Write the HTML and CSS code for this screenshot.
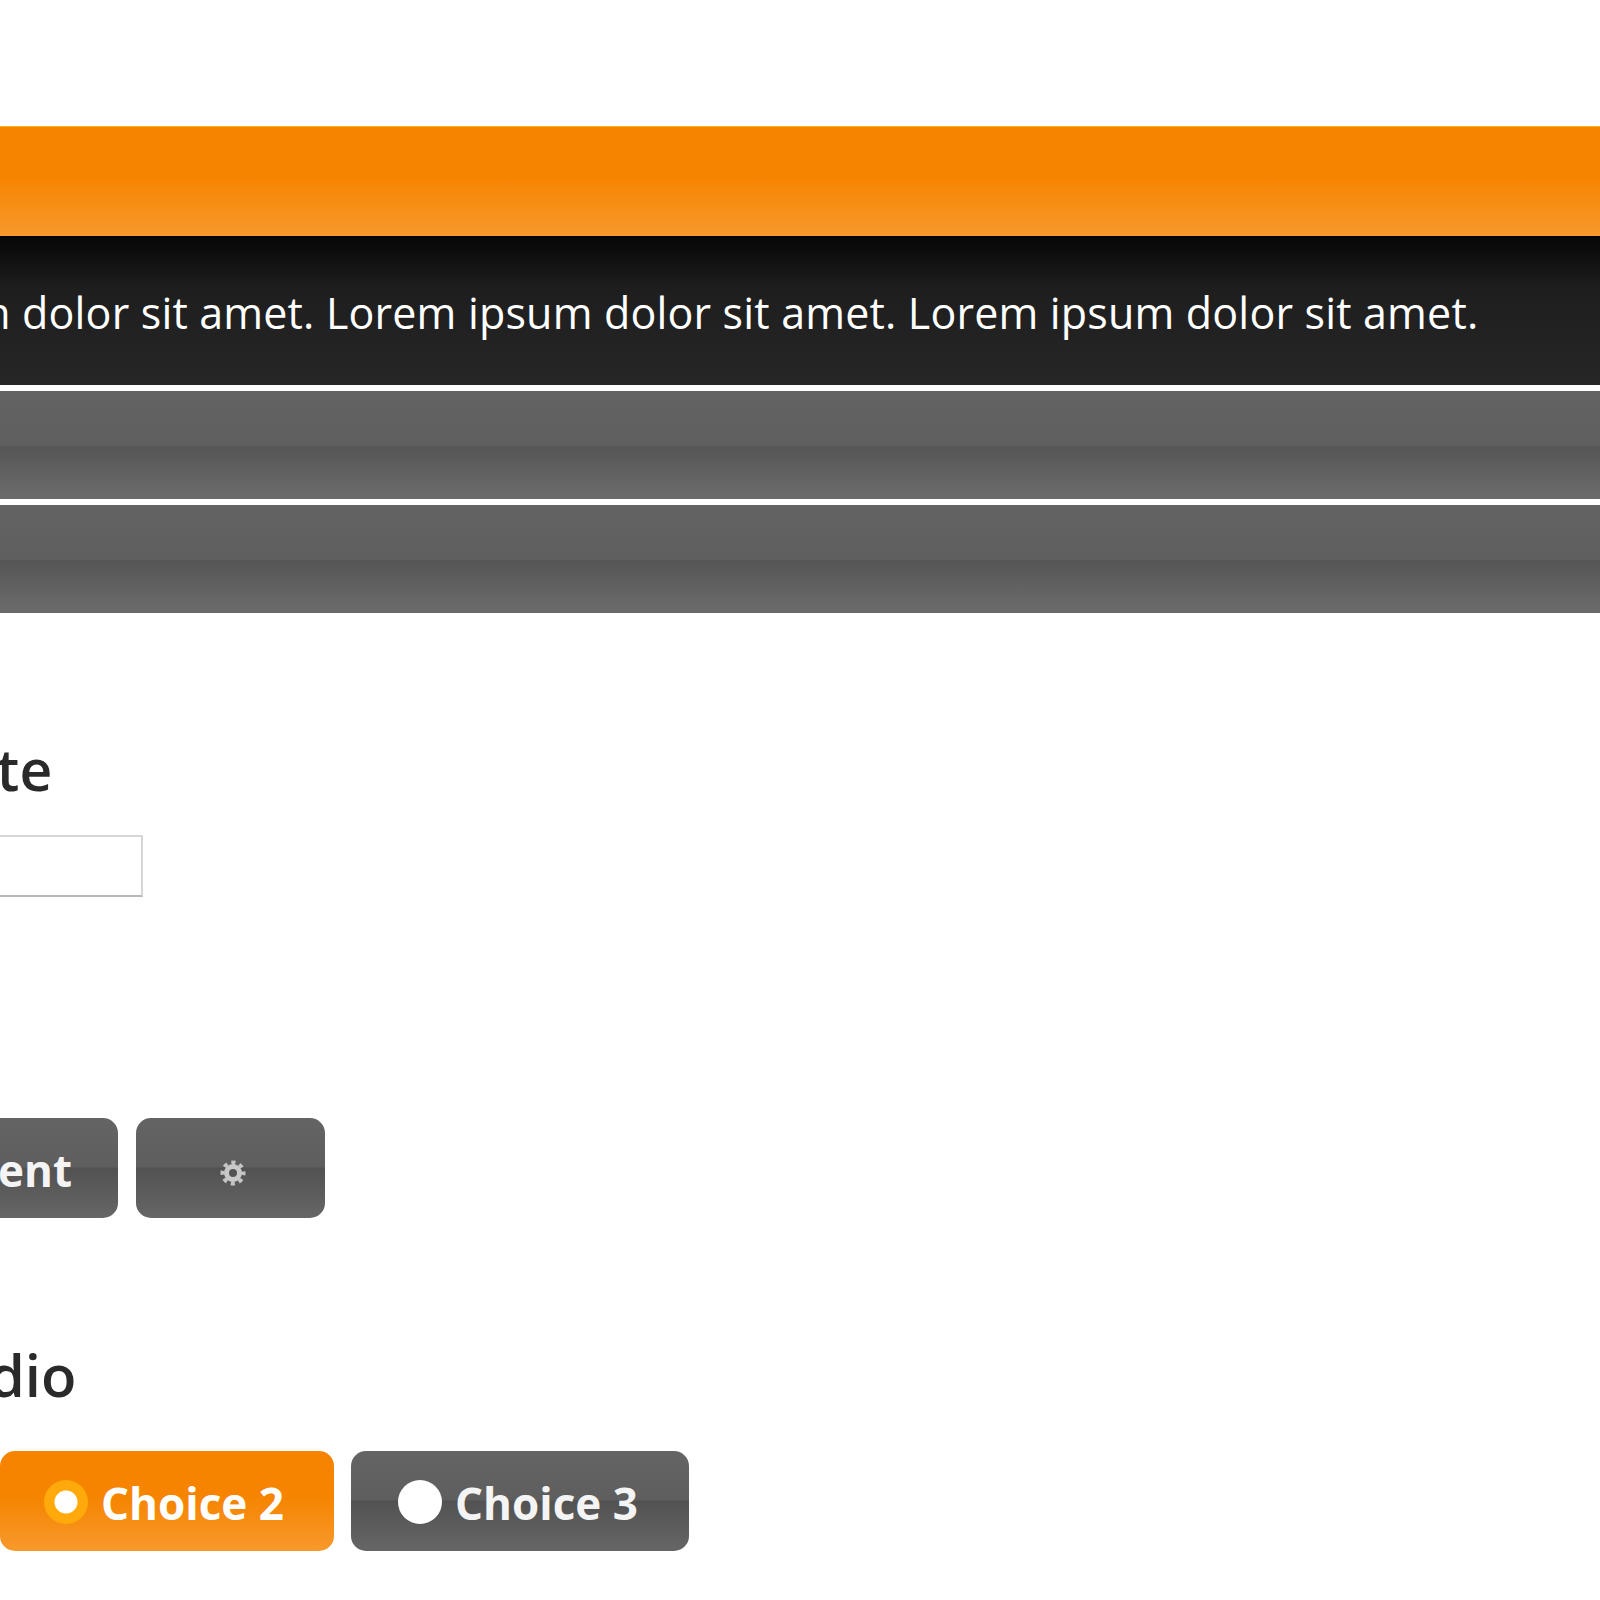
FILE: index.html
```html
<!DOCTYPE html>
<html lang="en">
<head>
<meta charset="utf-8">
<title>UI components</title>
<link rel="stylesheet" href="styles.css">
</head>
<body>
<div class="page">
  <div class="bar bar-orange"></div>
  <div class="bar bar-dark"><p class="message">Lorem ipsum dolor sit amet. Lorem ipsum dolor sit amet. Lorem ipsum dolor sit amet.</p></div>
  <div class="bar bar-gray"></div>
  <div class="bar bar-gray"></div>
  <section class="field field-date">
    <h2 class="label label-date">Date</h2>
    <input class="input" type="text" aria-label="Date">
  </section>
  <section class="buttons">
    <button class="btn btn-gray btn-text" type="button">Segment</button>
    <button class="btn btn-gray btn-icon" type="button" aria-label="Settings">
      <svg class="gear" viewBox="0 0 26 26" aria-hidden="true">
        <circle class="gear-teeth" cx="13" cy="13" r="10.500"></circle>
        <circle class="gear-ring" cx="13" cy="13" r="6.500"></circle>
      </svg>
    </button>
  </section>
  <section class="field field-radio">
    <h2 class="label label-radio">Radio</h2>
    <div class="choices">
      <label class="btn btn-orange choice"><span class="dot dot-on"></span>Choice 2</label>
      <label class="btn btn-gray choice choice-3"><span class="dot"></span>Choice 3</label>
    </div>
  </section>
</div>
</body>
</html>
```
FILE: styles.css
```css
* { box-sizing: border-box; }
html, body { margin: 0; background: #fff; }
body { width: 1600px; height: 1600px; overflow: hidden; font-family: "Open Sans", "Liberation Sans", sans-serif; color: #2a2a2a; }
.page { padding-top: 126px; }
.bar { height: 108px; margin-bottom: 6px; }
.bar-orange { height: 110px; margin-bottom: 0; background: linear-gradient(#f68400 0%, #f68400 45%, #f7992c 100%); border-top: 1px solid #ffb020; }
.bar-dark { height: 149px; margin-bottom: 6px; background: linear-gradient(#060606 0%, #1e1e1e 35%, #262626 100%); display: flex; align-items: center; overflow: hidden; }
.message { margin: 4px 0 0 -256px; white-space: nowrap; color: #fff; font-size: 43px; letter-spacing: .17px; }
.bar-gray { background: linear-gradient(#636363 0%, #5f5f5f 50.500%, #555 51%, #686868 90%, #6a6a6a 100%); }
.bar-gray:last-of-type { margin-bottom: 0; }
.field-date { padding-top: 128px; }
.label { margin: 0; font-weight: 600; font-size: 57px; line-height: 56px; }
.label-date { margin-left: -78px; }
.label-radio { margin-left: -82px; font-size: 58px; }
.input { display: block; width: 300px; height: 62px; margin: 38px 0 0 -157px; border: 2px solid #d6d6d6; border-bottom-color: #b8b8b8; background: #fff; }
.buttons { display: flex; gap: 18px; margin: 221px 0 0 -200px; }
.btn { display: flex; align-items: center; justify-content: center; height: 100px; padding: 4px 0 0; border: 0; border-radius: 15px; font-family: inherit; font-weight: 700; font-size: 44px; color: #f4f4f4; }
.btn-gray { background: linear-gradient(#646464 0%, #5e5e5e 49%, #525252 50%, #666 100%); }
.btn-orange { background: linear-gradient(#f68400 0%, #f68400 45%, #f7992c 100%); color: #fff; }
.btn-text { width: 318px; justify-content: flex-end; padding-right: 46px; }
.btn-icon { width: 189px; padding-left: 4px; }
.gear { width: 26px; height: 26px; margin-top: 6px; fill: none; }
.gear-teeth { stroke: #c4c4c4; stroke-width: 4; stroke-dasharray: 4.100 4.147; stroke-dashoffset: 2; }
.gear-ring { stroke: #c9c9c9; stroke-width: 5; }
.field-radio { padding-top: 129px; }
.choices { display: flex; gap: 17px; margin-top: 48px; }
.choice { width: 334px; justify-content: flex-start; padding-left: 44px; gap: 13px; }
.choice-3 { width: 338px; padding-left: 47px; }
.dot { width: 44px; height: 44px; margin-top: -2px; border-radius: 50%; background: #fff; flex: none; }
.dot-on { background: radial-gradient(circle, #fff 0 11px, #ffa90a 12px); }
```
